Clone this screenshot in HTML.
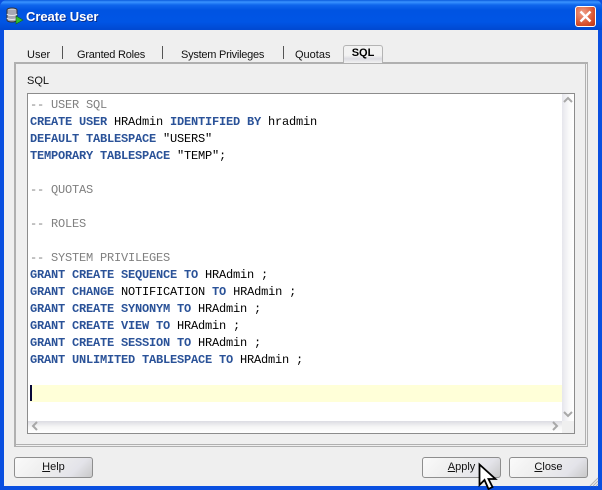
<!DOCTYPE html>
<html><head><meta charset="utf-8"><style>
html,body{margin:0;padding:0;background:#ece9d8}
#w{position:relative;width:602px;height:490px;overflow:hidden;background:#0a4fe0;font-family:"Liberation Sans",sans-serif;font-size:11px;color:#111}
#w div{position:absolute;box-sizing:border-box}
#tb{left:0;top:0;width:602px;height:30px;border-radius:7px 7px 0 0;background:linear-gradient(#0a5bdc 0,#3a93ff 2px,#0f66ec 5px,#0054e2 10px,#0055e5 22px,#0048d0 30px)}
#title{left:26px;top:9px;color:#fff;font-weight:bold;font-size:13px;letter-spacing:-.05px;text-shadow:1px 1px 0 #0a2f90;white-space:nowrap}
#cl{left:575px;top:6px;width:21px;height:21px;border:1px solid #fff;border-radius:3px;background:radial-gradient(circle at 35% 30%,#f0a088,#d8502c 65%,#b83414)}
#body{left:4px;top:30px;width:594px;height:456px;background:#efefef}
.tab{top:48px;height:14px;line-height:14px;white-space:nowrap;font-size:11px}
.sep{top:46px;width:1px;height:13px;background:#555}
#sqltab{left:343px;top:45px;width:40px;height:18px;border:1px solid #b4b4b4;border-bottom:none;border-radius:3px 3px 0 0;background:linear-gradient(#f2f2f2 0,#f2f2f2 55%,#dcdce2 75%,#f2f2f2 100%);text-align:center;font-weight:bold;line-height:14px;font-size:11px;color:#000}
#panel{left:14px;top:62px;width:574px;height:385px;border:1px solid #b0b0b0;border-left-width:2px;border-top-width:2px}
#panel2{left:16px;top:64px;width:570px;height:381px;border-right:1px solid #b0b0b0;border-bottom:1px solid #b0b0b0}
#lbl{left:27px;top:75px;font-size:11px}
#ta{left:27px;top:93px;width:548px;height:341px;border:1px solid #8c8c8c;background:#fff}
#hl{left:30px;top:385px;width:532px;height:17px;background:#ffffd8}
#car{left:30px;top:385px;width:2px;height:16px;background:#08083a}
#code{left:30px;top:97px;font:12px/17px "Liberation Mono",monospace;letter-spacing:-.2px;white-space:pre;color:#000}
#code b{color:#2a5298}
#code i{font-style:normal;color:#808080}
#vs{left:562px;top:94px;width:12px;height:327px;background:linear-gradient(90deg,#e6e6ec,#fafafa 60%,#fff)}
#hs{left:28px;top:421px;width:534px;height:12px;background:linear-gradient(#dcdce2,#f6f6f6 50%,#fff)}
#cor{left:562px;top:421px;width:12px;height:12px;background:#efefef}
.btn{top:457px;width:79px;height:21px;border:1px solid #8e8e8e;border-radius:3px;background:linear-gradient(135deg,#fafafa 0,#ededed 45%,#e4e4ea 75%,#c8c8c8 100%);text-align:center;line-height:19px;font-size:11px}
.btn u{text-decoration:underline}
svg{position:absolute;overflow:visible}
</style></head><body><div id="w">
<div id="tb"></div>
<svg style="left:6px;top:7px" width="18" height="18" viewBox="0 0 18 18"><ellipse cx="6" cy="3" rx="5" ry="2" fill="#c8c8d0" stroke="#333"/><path d="M1 3v10c0 1 2 2 5 2s5-1 5-2V3" fill="#a8a8b4" stroke="#333"/><path d="M1 7c1 2 9 2 10 0M1 11c1 2 9 2 10 0" fill="none" stroke="#e8e8e8"/><path d="M10 9l7 4-7 4z" fill="#30c030" stroke="#186018" stroke-width=".6"/></svg>
<div id="title">Create User</div>
<div id="cl"><svg style="left:3px;top:3px" width="13" height="13" viewBox="0 0 13 13"><path d="M1.500 1.500l10 10M11.500 1.500l-10 10" stroke="#fff" stroke-width="2.400"/></svg></div>
<div id="body"></div>
<div class="tab" style="left:27px">User</div><div class="sep" style="left:62px"></div>
<div class="tab" style="left:77px;letter-spacing:-.22px">Granted Roles</div><div class="sep" style="left:162px"></div>
<div class="tab" style="left:181px;letter-spacing:-.25px">System Privileges</div><div class="sep" style="left:283px"></div>
<div class="tab" style="left:295px">Quotas</div>
<div id="panel"></div><div id="panel2"></div>
<div id="sqltab">SQL</div>
<div id="lbl">SQL</div>
<div id="ta"></div>
<div id="hl"></div>
<div id="code"><i>-- USER SQL</i>
<b>CREATE USER</b> HRAdmin <b>IDENTIFIED BY</b> hradmin
<b>DEFAULT TABLESPACE</b> "USERS"
<b>TEMPORARY TABLESPACE</b> "TEMP";

<i>-- QUOTAS</i>

<i>-- ROLES</i>

<i>-- SYSTEM PRIVILEGES</i>
<b>GRANT CREATE SEQUENCE TO</b> HRAdmin ;
<b>GRANT CHANGE</b> NOTIFICATION <b>TO</b> HRAdmin ;
<b>GRANT CREATE SYNONYM TO</b> HRAdmin ;
<b>GRANT CREATE VIEW TO</b> HRAdmin ;
<b>GRANT CREATE SESSION TO</b> HRAdmin ;
<b>GRANT UNLIMITED TABLESPACE TO</b> HRAdmin ;</div>
<div id="car"></div>
<div id="vs"></div><div id="hs"></div><div id="cor"></div>
<svg style="left:0;top:0" width="602" height="490"><g fill="none" stroke="#a8a8a8" stroke-width="2"><path d="M564 102l4-4 4 4"/><path d="M564 412l4 4 4-4"/><path d="M37 422l-4 4 4 4"/><path d="M553 422l4 4-4 4"/></g><g stroke="#b4b4b4" stroke-width="1"><path d="M590 486l8-8M593 486l5-5M596 486l2-2"/></g></svg>
<div class="btn" style="left:14px"><u>H</u>elp</div>
<div class="btn" style="left:422px"><u>A</u>pply</div>
<div class="btn" style="left:509px"><u>C</u>lose</div>
<svg style="left:478px;top:464px" width="24" height="26" viewBox="0 0 24 26"><path d="M1.500 0.500V21l5-5 4 9 4-2-4-8h7z" fill="#fff" stroke="#000" stroke-width="1.800"/></svg>
</div></body></html>
